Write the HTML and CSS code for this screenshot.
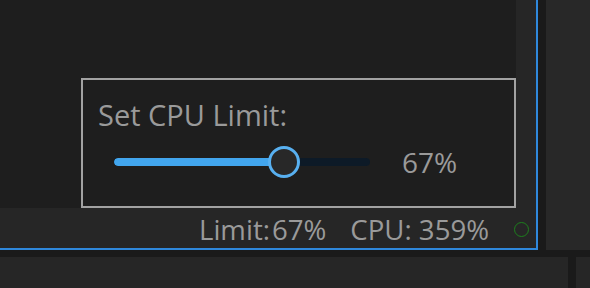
FILE: index.html
```html
<!DOCTYPE html>
<html>
<head>
<meta charset="utf-8">
<link rel="stylesheet" href="styles.css">
</head>
<body>
<div class="app">
  <div class="top">
    <div class="panel">
      <div class="body">
        <div class="content">
          <div class="popup">
            <div class="popup-title">Set CPU Limit:</div>
            <div class="slider-row">
              <div class="slider">
                <div class="track"><div class="fill" style="width:66.4%"></div></div>
                <div class="thumb" style="left:66.4%"></div>
              </div>
              <div class="value">67%</div>
            </div>
          </div>
        </div>
        <div class="scroll"></div>
      </div>
      <div class="status">
        <span class="lbl">Limit:</span><span class="num">67%</span>
        <span class="cpu">CPU: 359%</span>
        <span class="dot"></span>
      </div>
    </div>
    <div class="side"></div>
  </div>
  <div class="bottom">
    <div class="bottom-left"></div>
    <div class="bottom-right"></div>
  </div>
</div>
</body>
</html>
```
FILE: styles.css
```css
html, body {
  margin: 0;
  padding: 0;
}
body {
  background: #1a1a1a;
  width: 590px;
  height: 288px;
  overflow: hidden;
  font-family: "Open Sans", "Noto Sans", sans-serif;
  color: #9c9c9c;
}
.app {
  display: flex;
  flex-direction: column;
  gap: 7px;
  height: 288px;
}
.top {
  display: flex;
  gap: 8px;
  height: 250px;
}
.panel {
  width: 536px;
  height: 248px;
  border-right: 2px solid #2f88dc;
  border-bottom: 2px solid #2f88dc;
  background: #262626;
  display: flex;
  flex-direction: column;
}
.body {
  display: flex;
  height: 208px;
}
.content {
  width: 516px;
  background: #1e1e1e;
  display: flex;
  justify-content: flex-end;
  align-items: flex-end;
}
.scroll {
  flex: 1;
  background: #262626;
}
.popup {
  box-sizing: border-box;
  width: 435px;
  height: 130px;
  border: 2px solid #a2a2a2;
  background: #1e1e1e;
  padding: 21px 0 0 15px;
}
.popup-title {
  font-size: 29px;
  line-height: 28px;
  color: #9a9a9a;
}
.slider-row {
  display: flex;
  align-items: center;
  margin-top: 17px;
  height: 32px;
}
.slider {
  position: relative;
  margin-left: 16px;
  width: 256px;
  height: 32px;
  display: flex;
  align-items: center;
}
.track {
  width: 100%;
  height: 8px;
  border-radius: 4px;
  background: #0d1a27;
  overflow: hidden;
}
.fill {
  height: 100%;
  background: #42a6ee;
  border-radius: 4px 0 0 4px;
}
.thumb {
  position: absolute;
  top: 0;
  box-sizing: border-box;
  width: 32px;
  height: 32px;
  margin-left: -16px;
  border-radius: 50%;
  border: 3.5px solid #58b0f0;
  background: #282828;
}
.value {
  margin-left: 32px;
  font-size: 28px;
  line-height: 28px;
  color: #9a9a9a;
}
.status {
  height: 40px;
  display: flex;
  align-items: center;
  justify-content: flex-end;
  padding: 2px 7px 0 0;
  box-sizing: border-box;
  font-size: 27.6px;
  line-height: 28px;
  color: #9a9a9a;
}
.num {
  margin-left: 2px;
}
.cpu {
  margin-left: 24px;
}
.dot {
  box-sizing: border-box;
  width: 15px;
  height: 15px;
  border-radius: 50%;
  border: 1.5px solid #1d7f1d;
  margin-left: 25px;
}
.side {
  flex: 1;
  background: #282828;
}
.bottom {
  flex: 1;
  display: flex;
  gap: 8px;
}
.bottom-left {
  width: 568px;
  background: #262626;
}
.bottom-right {
  flex: 1;
  background: #262626;
}
```
